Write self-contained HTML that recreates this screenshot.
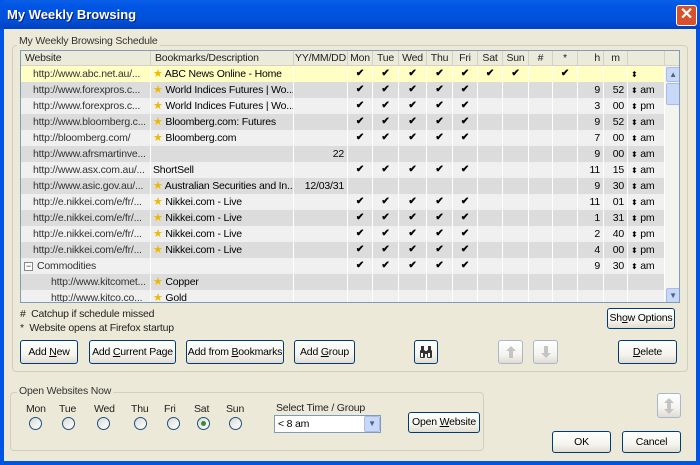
<!DOCTYPE html>
<html><head><style>
*{box-sizing:border-box;margin:0;padding:0}
body{width:700px;height:465px;overflow:hidden;font-family:"Liberation Sans",sans-serif;font-size:10.5px;letter-spacing:-0.2px;color:#000;background:#0054e3;position:relative}
.a{position:absolute;white-space:nowrap}
#win{left:4px;top:29px;width:692px;height:432px;background:#ece9d8}
#title{left:0;top:0;width:700px;height:29px;background:linear-gradient(#0a5fe6,#0055e5 20%,#0250d8 70%,#0041c0);border-radius:7px 7px 0 0}
#title span{position:absolute;left:7px;top:7px;color:#fff;font-weight:bold;font-size:13px;letter-spacing:0;text-shadow:1px 1px #0a1e80}
#close{left:676px;top:5px;width:21px;height:21px;background:#d9502c;border:1px solid #fff;border-radius:3px;color:#fff;font-weight:bold;font-size:16px;text-align:center;line-height:18px}
.grp{border:1px solid #d0d0bf;border-radius:4px}
.gl{background:#ece9d8;padding:0 2px;color:#333}
#tbl{left:20px;top:50px;width:660px;height:253px;border:1px solid #7f9db9;background:#fff;overflow:hidden}
.hd{position:absolute;top:0;height:15px;background:#ebeadb;border-bottom:1px solid #d6d2c2;width:660px}
.hc{position:absolute;top:0;height:15px;line-height:15px;border-right:1px solid #d6d2c2;text-align:center;color:#222;white-space:nowrap;overflow:hidden}
.row{position:absolute;left:0;width:644px;height:16px;line-height:16px}
.c{position:absolute;top:0;height:16px;border-right:1px solid #fff;white-space:nowrap;overflow:hidden}
.ck{text-align:center;font-size:10px;font-weight:bold}
.r{text-align:right;padding-right:3px}
.star{color:#f0b800;font-size:11px}
.btn{position:absolute;height:24px;border:1px solid #003c74;border-radius:3px;background:linear-gradient(#fff,#f5f4ee 60%,#e0dcd2);text-align:center;line-height:22px;white-space:nowrap}
.rad{position:absolute;width:13px;height:13px;border-radius:50%;border:1px solid #1c5180;background:linear-gradient(135deg,#dcdcd4,#fff)}
.rl{position:absolute;color:#222;white-space:nowrap}
u{text-decoration:underline}
</style></head><body>
<div id="title" class="a"><span>My Weekly Browsing</span></div>
<div id="close" class="a">✕</div>
<div id="win" class="a"></div>

<div class="a grp" style="left:12px;top:45px;width:676px;height:327px"></div>
<div class="a gl" style="left:17px;top:35px">My Weekly Browsing Schedule</div>

<div id="tbl" class="a">
<div class="hd">
<div class="hc" style="left:0;width:130px;text-align:left;padding-left:4px">Website</div>
<div class="hc" style="left:130px;width:143px;text-align:left;padding-left:4px">Bookmarks/Description</div>
<div class="hc" style="left:273px;width:54px">YY/MM/DD</div>
<div class="hc" style="left:327px;width:25px">Mon</div>
<div class="hc" style="left:352px;width:26px">Tue</div>
<div class="hc" style="left:378px;width:28px">Wed</div>
<div class="hc" style="left:406px;width:26px">Thu</div>
<div class="hc" style="left:432px;width:25px">Fri</div>
<div class="hc" style="left:457px;width:25px">Sat</div>
<div class="hc" style="left:482px;width:26px">Sun</div>
<div class="hc" style="left:508px;width:24px">#</div>
<div class="hc" style="left:532px;width:25px">*</div>
<div class="hc" style="left:557px;width:26px;text-align:right;padding-right:3px">h</div>
<div class="hc" style="left:583px;width:24px">m</div>
<div class="hc" style="left:607px;width:37px"></div>
</div>
<div id="rows"></div>
<div class="a" style="left:644px;top:15px;width:15px;height:237px;background:#f3f3ef"></div>
<div class="a" style="left:645px;top:16px;width:14px;height:15px;background:#c8d8f8;border:1px solid #a8bce8;border-radius:2px;text-align:center;font-size:8px;line-height:13px;color:#4d6185">▲</div>
<div class="a" style="left:645px;top:32px;width:14px;height:22px;background:#c8d8f8;border:1px solid #a8bce8;border-radius:2px"></div>
<div class="a" style="left:645px;top:237px;width:14px;height:15px;background:#c8d8f8;border:1px solid #a8bce8;border-radius:2px;text-align:center;font-size:8px;line-height:13px;color:#4d6185">▼</div>
</div>

<div class="a" style="left:20px;top:308px;color:#222">#&nbsp; Catchup if schedule missed</div>
<div class="a" style="left:20px;top:322px;color:#222">*&nbsp; Website opens at Firefox startup</div>
<div class="btn" style="left:607px;top:308px;width:68px;height:21px;line-height:19px">Sh<u>o</u>w Options</div>
<div class="btn" style="left:20px;top:340px;width:58px">Add <u>N</u>ew</div>
<div class="btn" style="left:89px;top:340px;width:87px">Add <u>C</u>urrent Page</div>
<div class="btn" style="left:186px;top:340px;width:98px">Add from <u>B</u>ookmarks</div>
<div class="btn" style="left:294px;top:340px;width:61px">Add <u>G</u>roup</div>
<div class="btn" style="left:414px;top:340px;width:24px"><svg width="14" height="14" viewBox="0 0 14 14" style="margin-top:4px"><rect x="1" y="5" width="5" height="8" rx="1" fill="#333"/><rect x="8" y="5" width="5" height="8" rx="1" fill="#333"/><rect x="2" y="1" width="3" height="5" fill="#333"/><rect x="9" y="1" width="3" height="5" fill="#333"/><rect x="5" y="6" width="4" height="3" fill="#333"/><rect x="2" y="8" width="2" height="4" fill="#fff"/><rect x="9" y="8" width="2" height="4" fill="#fff"/></svg></div>
<div class="btn" style="left:498px;top:340px;width:25px;border-color:#a8b8cc"><svg width="12" height="14" viewBox="0 0 12 14" style="margin-top:4px"><path d="M6 1L11 6H8V13H4V6H1Z" fill="#c4c4c4"/></svg></div>
<div class="btn" style="left:533px;top:340px;width:25px;border-color:#a8b8cc"><svg width="12" height="14" viewBox="0 0 12 14" style="margin-top:4px"><path d="M6 13L11 8H8V1H4V8H1Z" fill="#c4c4c4"/></svg></div>
<div class="btn" style="left:618px;top:340px;width:59px"><u>D</u>elete</div>

<div class="a grp" style="left:10px;top:392px;width:474px;height:59px"></div>
<div class="a gl" style="left:17px;top:385px">Open Websites Now</div>
<div id="radios"></div>
<div class="rl" style="left:276px;top:402px">Select Time / Group</div>
<div class="a" style="left:274px;top:415px;width:107px;height:18px;border:1px solid #7f9db9;background:#fff;padding-left:3px;line-height:16px">&lt; 8 am</div>
<div class="a" style="left:364px;top:416px;width:16px;height:16px;background:#c8d8f8;border:1px solid #a8bce8;border-radius:2px;font-size:8px;text-align:center;line-height:14px;color:#4d6185">▼</div>
<div class="btn" style="left:408px;top:412px;width:72px;height:21px;line-height:19px">Open <u>W</u>ebsite</div>
<div class="btn" style="left:657px;top:393px;width:24px;height:25px;border-color:#a8b8cc"><svg width="10" height="16" viewBox="0 0 10 16" style="margin-top:4px"><path d="M5 0L10 5H7V11H10L5 16L0 11H3V5H0Z" fill="#c4c4c4"/></svg></div>
<div class="btn" style="left:552px;top:431px;width:59px;height:22px;line-height:20px">OK</div>
<div class="btn" style="left:622px;top:431px;width:59px;height:22px;line-height:20px">Cancel</div>

<script>
var cols=[[0,130],[130,143],[273,54],[327,25],[352,26],[378,28],[406,26],[432,25],[457,25],[482,26],[508,24],[532,25],[557,26],[583,24],[607,37]];
var W5=[1,1,1,1,1,0,0,0,0];
var Z=[0,0,0,0,0,0,0,0,0];
var data=[
["http://www.abc.net.au/...","★ ABC News Online - Home","",[1,1,1,1,1,1,1,0,1],"","","◆"],
["http://www.forexpros.c...","★ World Indices Futures | Wo...","",W5,"9","52","am"],
["http://www.forexpros.c...","★ World Indices Futures | Wo...","",W5,"3","00","pm"],
["http://www.bloomberg.c...","★ Bloomberg.com: Futures","",W5,"9","52","am"],
["http://bloomberg.com/","★ Bloomberg.com","",W5,"7","00","am"],
["http://www.afrsmartinve...","","22",Z,"9","00","am"],
["http://www.asx.com.au/...","ShortSell","",W5,"11","15","am"],
["http://www.asic.gov.au/...","★ Australian Securities and In...","12/03/31",Z,"9","30","am"],
["http://e.nikkei.com/e/fr/...","★ Nikkei.com - Live","",W5,"11","01","am"],
["http://e.nikkei.com/e/fr/...","★ Nikkei.com - Live","",W5,"1","31","pm"],
["http://e.nikkei.com/e/fr/...","★ Nikkei.com - Live","",W5,"2","40","pm"],
["http://e.nikkei.com/e/fr/...","★ Nikkei.com - Live","",W5,"4","00","pm"],
["G","","",W5,"9","30","am"],
["http://www.kitcomet...","★ Copper","",Z,"","",""],
["http://www.kitco.co...","★ Gold","",Z,"","",""]];
var h="";
data.forEach(function(d,i){
 var bg=i==0?"#ffffc4":(i%2?"#dcdcdc":"#f0f0f0");
 h+='<div class="row" style="top:'+(15+i*16)+'px;background:'+bg+'">';
 var ws=d[0]=="G"?'<span style="display:inline-block;width:9px;height:9px;border:1px solid #888;font-size:9px;line-height:7px;text-align:center;margin:0 4px 0 3px;background:#fff">−</span>Commodities':d[0];
 var pl=d[0]=="G"?0:(i>=13?30:12);
 h+='<div class="c" style="left:0;width:130px;padding-left:'+pl+'px;color:#333">'+ws+'</div>';
 h+='<div class="c" style="left:130px;width:143px;padding-left:2px">'+d[1].replace("★",'<span class="star">★</span>')+'</div>';
 h+='<div class="c r" style="left:273px;width:54px">'+d[2]+'</div>';
 for(var k=0;k<9;k++){var c=cols[3+k];h+='<div class="c ck" style="left:'+c[0]+'px;width:'+c[1]+'px">'+(d[3][k]?'✔':'')+'</div>';}
 h+='<div class="c r" style="left:557px;width:26px">'+d[4]+'</div>';
 h+='<div class="c r" style="left:583px;width:24px">'+d[5]+'</div>';
 h+='<div class="c" style="left:607px;width:37px;padding-left:3px">'+(d[6]=="◆"?'<span style="font-size:8px">⬍</span>':(d[6]?'<span style="font-size:8px">⬍</span> '+d[6]:''))+'</div>';
 h+='</div>';});
document.getElementById("rows").innerHTML=h;
var days=["Mon","Tue","Wed","Thu","Fri","Sat","Sun"],xs=[35,68,103,140,173,203,235],r="";
days.forEach(function(d,i){r+='<div class="rl" style="left:'+(xs[i]-9)+'px;top:403px">'+d+'</div><div class="rad" style="left:'+(xs[i]-6)+'px;top:417px">'+(i==5?'<div style="position:absolute;left:3px;top:3px;width:5px;height:5px;border-radius:50%;background:#3a8a3a"></div>':'')+'</div>';});
document.getElementById("radios").innerHTML=r;
</script>
</body></html>
